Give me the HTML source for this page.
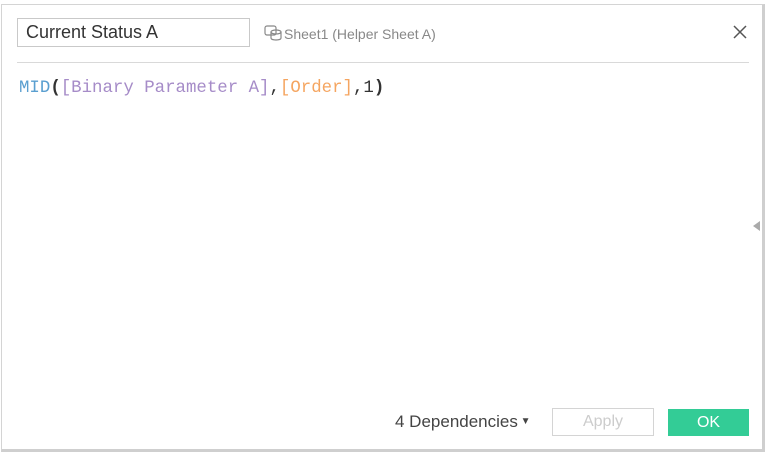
<!DOCTYPE html>
<html><head><style>
body{margin:0;width:768px;height:455px;background:#fff;position:relative;overflow:hidden;font-family:"Liberation Sans",sans-serif}
.dlg{position:absolute;left:1px;top:4px;width:760px;height:444px;background:#fff;border:1px solid #d4d4d4;border-right:3px solid #cfcfcf;border-bottom:3px solid #cfcfcf}
.name{position:absolute;left:15px;top:13px;font-size:18px;color:#333;line-height:27px;padding-left:8px;box-sizing:border-box;width:233px;height:29px;border:1px solid #c9c9c9}
.src{position:absolute;left:262px;top:19px;font-size:14px;color:#888}
.hr{position:absolute;left:15px;top:57px;width:732px;height:1px;background:#d9d9d9}
.x{position:absolute;left:731px;top:20px}
.code{position:absolute;left:17px;top:74px;font-family:"Liberation Mono",monospace;font-size:17.4px;color:#333}
.dep{position:absolute;left:393px;top:407px;font-size:17px;color:#444}
.apply{position:absolute;left:550px;top:403px;width:100px;height:26px;border:1px solid #d4d4d4;color:#ccc;font-size:16px;text-align:center;line-height:26px}
.ok{position:absolute;left:666px;top:404px;width:81px;height:27px;background:#33cc96;color:#fff;font-size:16px;text-align:center;line-height:27px}
.tri{position:absolute;left:751px;top:216px;width:0;height:0;border-top:5px solid transparent;border-bottom:5px solid transparent;border-right:7px solid #aaa}
</style></head><body>
<div class="dlg">
<div class="name">Current Status A</div>
<div class="src"><svg width="20" height="18" viewBox="0 0 20 18" style="vertical-align:-3px"><g fill="none" stroke="#888" stroke-width="1.2"><rect x="1" y="2" width="11" height="9" rx="2"/><ellipse cx="12" cy="8" rx="5" ry="2"/><path d="M7 8v6c0 1.2 2.2 2 5 2s5-.8 5-2V8"/></g></svg>Sheet1 (Helper Sheet A)</div>
<div class="hr"></div>
<svg class="x" width="14" height="14" viewBox="0 0 14 14"><path d="M1 1L13 13M13 1L1 13" stroke="#555" stroke-width="1.5"/></svg>
<div class="code"><span style="color:#5a9fd0">MID</span><b>(</b><span style="color:#a68cc8">[Binary Parameter A]</span>,<span style="color:#f5a560">[Order]</span>,1<b>)</b></div>
<div class="tri"></div>
<div class="dep">4 Dependencies<span style="font-size:10px;vertical-align:3px"> ▼</span></div>
<div class="apply">Apply</div>
<div class="ok">OK</div>
</div>
</body></html>
